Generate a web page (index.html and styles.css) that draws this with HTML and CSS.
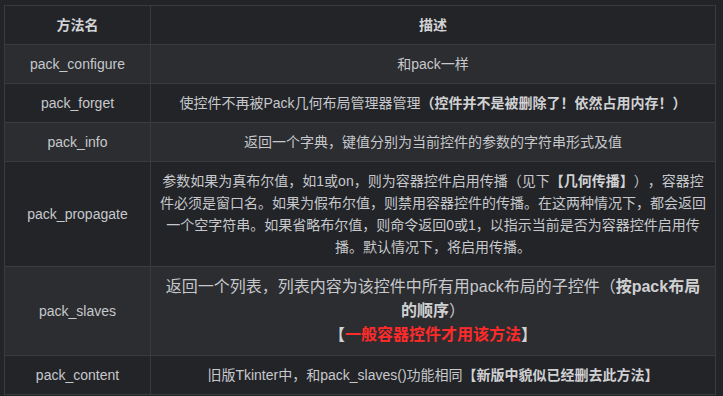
FILE: index.html
```html
<!DOCTYPE html>
<html lang="zh-CN">
<head>
<meta charset="utf-8">
<title>pack 方法</title>
<link rel="stylesheet" href="styles.css">
</head>
<body>
<div class="table">
  <div class="cell head">方法名</div>
  <div class="cell head">描述</div>

  <div class="cell light">pack_configure</div>
  <div class="cell light">和pack一样</div>

  <div class="cell dark">pack_forget</div>
  <div class="cell dark"><span>使控件不再被Pack几何布局管理器管理<b>（控件并不是被删除了！依然占用内存！）</b></span></div>

  <div class="cell light">pack_info</div>
  <div class="cell light">返回一个字典，键值分别为当前控件的参数的字符串形式及值</div>

  <div class="cell dark">pack_propagate</div>
  <div class="cell dark"><span>参数如果为真布尔值，如1或on，则为容器控件启用传播（见下<b>【几何传播】</b>），容器控件必须是窗口名。如果为假布尔值，则禁用容器控件的传播。在这两种情况下，都会返回一个空字符串。如果省略布尔值，则命令返回0或1，以指示当前是否为容器控件启用传播。默认情况下，将启用传播。</span></div>

  <div class="cell light">pack_slaves</div>
  <div class="cell light big"><span>返回一个列表，列表内容为该控件中所有用pack布局的子控件（<b>按pack布局的顺序</b>）<br><b>【<em class="red">一般容器控件才用该方法</em>】</b></span></div>

  <div class="cell dark">pack_content</div>
  <div class="cell dark"><span>旧版Tkinter中，和pack_slaves()功能相同<b>【新版中貌似已经删去此方法】</b></span></div>
</div>
</body>
</html>
```

FILE: styles.css
```css
html, body {
  margin: 0;
  padding: 0;
  background: #232428;
}

body {
  font-family: "Liberation Sans", "Noto Sans CJK SC", sans-serif;
  font-size: 14px;
  color: #c6c8cc;
  text-spacing-trim: space-all;
}

.table {
  display: grid;
  grid-template-columns: 145px 1fr;
  gap: 1px;
  padding: 1px;
  width: 710px;
  margin: 5px 0 0 4px;
  background: #3a3b3f;
}

.cell {
  display: flex;
  align-items: center;
  justify-content: center;
  text-align: center;
  padding: 8px;
  line-height: 22px;
}

.head {
  background: #232428;
  font-weight: bold;
  color: #d2d3d5;
}

.light {
  background: #2c2d30;
}

.dark {
  background: #232428;
}

.big {
  font-size: 16px;
  line-height: 24px;
}

b {
  font-weight: bold;
  color: #d0d1d3;
}

.red {
  font-style: normal;
  color: #ff2a2a;
}
```
